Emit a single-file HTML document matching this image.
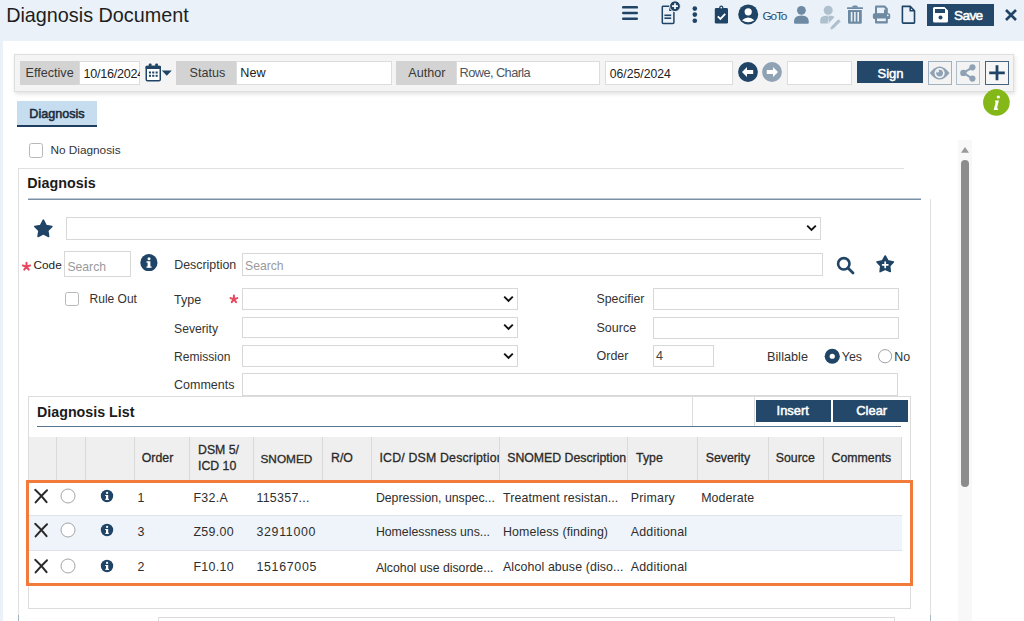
<!DOCTYPE html>
<html><head><meta charset="utf-8"><style>
html,body{margin:0;padding:0;width:1024px;height:621px;overflow:hidden;background:#fff}
body{position:relative;font-family:"Liberation Sans",sans-serif}
.r{position:absolute;display:block}
.t{position:absolute;white-space:nowrap}
</style></head><body>
<div class="r" style="left:0px;top:0px;width:1024.00px;height:41.00px;background:#eaf1f8"></div>
<div class="r" style="left:0px;top:41px;width:3.00px;height:580.00px;background:#eaf1f8"></div>
<div class="r" style="left:3px;top:41px;width:1021.00px;height:580.00px;background:#ffffff"></div>
<div class="t" style="left:6.2px;top:2.76px;font-size:19.8px;line-height:24.75px;font-weight:400;color:#1e1e1e;">Diagnosis Document</div>
<svg class="r" style="left:622px;top:5px;width:16.00px;height:16.00px" viewBox="0 0 16 16" preserveAspectRatio="none"><rect x="0" y="1" width="16" height="2.6" rx="1.2" fill="#1f4466"/><rect x="0" y="6.7" width="16" height="2.6" rx="1.2" fill="#1f4466"/><rect x="0" y="12.4" width="16" height="2.6" rx="1.2" fill="#1f4466"/></svg>
<svg class="r" style="left:660px;top:0px;width:22.00px;height:25.00px" viewBox="0 0 22 25" preserveAspectRatio="none"><path d="M2.3 6.3 h7.4 l4.2 4.2 v12.1 a0.9 0.9 0 0 1 -0.9 0.9 h-9.8 a0.9 0.9 0 0 1 -0.9 -0.9 v-15.4 a0.9 0.9 0 0 1 0.9 -0.9z" fill="none" stroke="#1f4466" stroke-width="1.5"/><path d="M9.2 6.5 v4.5 h4.5z" fill="#1f4466"/><rect x="4.4" y="14.5" width="6.8" height="1.6" fill="#1f4466"/><rect x="4.4" y="17.4" width="6.8" height="1.6" fill="#1f4466"/><circle cx="15" cy="6.2" r="5.4" fill="#1f4466" stroke="#eaf1f8" stroke-width="1"/><path d="M15 3.3v5.8M12.1 6.2h5.8" stroke="#fff" stroke-width="1.7"/></svg>
<svg class="r" style="left:690px;top:5px;width:10.00px;height:19.00px" viewBox="0 0 10 19" preserveAspectRatio="none"><circle cx="4.8" cy="3.6" r="2.3" fill="#1f4466"/><circle cx="4.8" cy="9.6" r="2.3" fill="#1f4466"/><circle cx="4.8" cy="15.8" r="2.3" fill="#1f4466"/></svg>
<svg class="r" style="left:714px;top:5px;width:15.00px;height:19.00px" viewBox="0 0 15 19" preserveAspectRatio="none"><rect x="0.8" y="3" width="13.2" height="15.6" rx="1.4" fill="#1f4466"/><circle cx="7.3" cy="2.6" r="2.1" fill="#1f4466"/><circle cx="7.3" cy="2.6" r="0.9" fill="#eaf1f8"/><path d="M3.8 11.3 l2.6 2.6 l4.8 -5" fill="none" stroke="#fff" stroke-width="1.8"/></svg>
<svg class="r" style="left:737px;top:4px;width:22.00px;height:21.00px" viewBox="0 0 22 21" preserveAspectRatio="none"><circle cx="11.2" cy="10.4" r="10" fill="#1f4466"/><circle cx="11.2" cy="7.8" r="3.6" fill="#fff"/><path d="M5 16.2 q6.2 -5.5 12.4 0 q-6.2 4.2 -12.4 0z" fill="#fff"/></svg>
<div class="t" style="left:762.4px;top:8.83px;font-size:11.8px;line-height:14.75px;font-weight:400;color:#2c4c6c;letter-spacing:-1.1px">GoTo</div>
<svg class="r" style="left:793px;top:4px;width:17.00px;height:20.00px" viewBox="0 0 17 20" preserveAspectRatio="none"><circle cx="8.4" cy="6.3" r="4.4" fill="#6d8aa2"/><path d="M1 17.5 q0 -6 7.4 -6 q7.4 0 7.4 6 v1 q0 1.2 -1.2 1.2 h-12.4 q-1.2 0 -1.2 -1.2z" fill="#6d8aa2"/></svg>
<svg class="r" style="left:820px;top:4px;width:22.00px;height:26.00px" viewBox="0 0 22 26" preserveAspectRatio="none"><circle cx="8.2" cy="6.2" r="4.5" fill="#aebfcd"/><path d="M0.2 18.4 v-1.8 q0 -4.6 5.5 -4.8 h5 q2.6 0 3.8 1.3 l-5.3 5.6 v0.9 h-7.8 a1.2 1.2 0 0 1 -1.2 -1.2z" fill="#aebfcd"/><path d="M7.6 12.2 l0.7 1.4 l-0.6 5.6 l0.6 0.6 l0.6 -0.6 l-0.6 -5.6 l0.7 -1.4z" fill="#eaf1f8"/><path d="M11.5 22.8 l7 -7 l1.6 1.6 l-7 7 l-2.2 0.6z" fill="#aebfcd" stroke="#aebfcd" stroke-width="1" stroke-linejoin="round"/></svg>
<svg class="r" style="left:846px;top:4px;width:18.00px;height:20.00px" viewBox="0 0 18 20" preserveAspectRatio="none"><rect x="1" y="3.2" width="16" height="1.8" rx="0.5" fill="#6d8aa2"/><path d="M6 3.4 q0 -2 2 -2 h2 q2 0 2 2z" fill="#6d8aa2"/><path d="M2 5.9 h13.8 v12.6 a1.2 1.2 0 0 1 -1.2 1.2 h-11.4 a1.2 1.2 0 0 1 -1.2 -1.2z" fill="#6d8aa2"/><rect x="4.8" y="8" width="1.6" height="9.6" fill="#eaf1f8"/><rect x="8.1" y="8" width="1.6" height="9.6" fill="#eaf1f8"/><rect x="11.4" y="8" width="1.6" height="9.6" fill="#eaf1f8"/></svg>
<svg class="r" style="left:872px;top:4px;width:19.00px;height:20.00px" viewBox="0 0 19 20" preserveAspectRatio="none"><path d="M3 2.6 a1 1 0 0 1 1 -1 h9 l2.8 2.8 v5.6 h-12.8z" fill="#6d8aa2"/><rect x="5" y="3.6" width="7" height="6" fill="#eaf1f8"/><path d="M12 3.6 v2 h1.8z" fill="#eaf1f8"/><rect x="0.9" y="9.2" width="17.3" height="5.8" rx="1.6" fill="#6d8aa2"/><circle cx="15.8" cy="11.3" r="0.9" fill="#eaf1f8"/><path d="M3 13.6 h12.8 v4.8 a1 1 0 0 1 -1 1 h-10.8 a1 1 0 0 1 -1 -1z" fill="#6d8aa2"/><rect x="5" y="14.5" width="8.8" height="2.7" fill="#eaf1f8"/></svg>
<svg class="r" style="left:901px;top:4px;width:15.00px;height:21.00px" viewBox="0 0 15 21" preserveAspectRatio="none"><path d="M1.4 2.4 h7.8 l4.3 4.3 v11.5 a0.9 0.9 0 0 1 -0.9 0.9 h-10.3 a0.9 0.9 0 0 1 -0.9 -0.9z" fill="none" stroke="#1f4466" stroke-width="1.6" stroke-linejoin="round"/><path d="M9.2 2.4 v4.3 h4.3" fill="none" stroke="#1f4466" stroke-width="1.5"/></svg>
<div class="r" style="left:927px;top:3.6px;width:67.00px;height:22.10px;background:#234869"></div>
<svg class="r" style="left:932px;top:6px;width:18.00px;height:17.00px" viewBox="0 0 18 17" preserveAspectRatio="none"><path d="M1 2.5 a1.5 1.5 0 0 1 1.5 -1.5 h10 l3.5 3.5 v10.5 a1.5 1.5 0 0 1 -1.5 1.5 h-12 a1.5 1.5 0 0 1 -1.5 -1.5z" fill="#fff"/><rect x="3" y="3" width="10" height="4" fill="#234869"/><circle cx="8.5" cy="11.5" r="2" fill="#234869"/></svg>
<div class="t" style="left:954px;top:6.78px;font-size:13.6px;line-height:17.0px;font-weight:400;color:#fff;letter-spacing:-0.6px;-webkit-text-stroke:0.55px #fff">Save</div>
<svg class="r" style="left:1004px;top:8px;width:14.00px;height:13.00px" viewBox="0 0 14 13" preserveAspectRatio="none"><path d="M2 2 L12 12 M12 2 L2 12" stroke="#1f4466" stroke-width="2.6"/></svg>
<div class="r" style="left:14px;top:54px;width:1000.00px;height:37.50px;background:#f4f4f4;border:1px solid #dedede;box-sizing:border-box;box-shadow:1px 2px 4px rgba(0,0,0,0.12)"></div>
<div class="r" style="left:20px;top:61px;width:58.60px;height:23.60px;background:#d3d3d3"></div>
<div class="t" style="left:25.6px;top:66.16px;font-size:12.6px;line-height:15.75px;font-weight:400;color:#383838;">Effective</div>
<div class="r" style="left:78.6px;top:61px;width:61.50px;height:23.60px;background:#fff;border:1px solid #dcdcdc;box-sizing:border-box"></div>
<div class="r" style="left:79.6px;top:62px;width:60px;height:21.6px;overflow:hidden">
<div class="t" style="left:4px;top:4.96px;font-size:12.6px;line-height:15.75px;font-weight:400;color:#222;letter-spacing:-0.25px">10/16/2024</div>
</div>
<svg class="r" style="left:145px;top:63px;width:28.00px;height:19.00px" viewBox="0 0 28 19" preserveAspectRatio="none"><rect x="1.25" y="3.55" width="14" height="14.2" rx="1.3" fill="#fff" stroke="#1f4466" stroke-width="1.5"/><rect x="0.5" y="2.8" width="15.5" height="3.2" rx="1" fill="#1f4466"/><rect x="3.9" y="0.5" width="2.6" height="3" rx="0.8" fill="#1f4466"/><rect x="10.3" y="0.5" width="2.6" height="3" rx="0.8" fill="#1f4466"/><g fill="#1f4466"><rect x="3.9" y="8.5" width="2.1" height="2"/><rect x="7.2" y="8.5" width="2.1" height="2"/><rect x="10.6" y="8.5" width="2.1" height="2"/><rect x="3.9" y="11.8" width="2.1" height="2"/><rect x="7.2" y="11.8" width="2.1" height="2"/><rect x="10.6" y="11.8" width="2.1" height="2"/></g><path d="M16.8 7.4 h10 l-5 5.4z" fill="#1f4466"/></svg>
<div class="r" style="left:176.2px;top:61px;width:60.20px;height:23.60px;background:#d3d3d3"></div>
<div class="t" style="left:189.5px;top:66.16px;font-size:12.6px;line-height:15.75px;font-weight:400;color:#383838;">Status</div>
<div class="r" style="left:236.4px;top:61px;width:155.30px;height:23.60px;background:#fff;border:1px solid #dcdcdc;box-sizing:border-box"></div>
<div class="t" style="left:240.3px;top:66.16px;font-size:12.6px;line-height:15.75px;font-weight:400;color:#222;">New</div>
<div class="r" style="left:396.1px;top:61px;width:60.30px;height:23.60px;background:#d3d3d3"></div>
<div class="t" style="left:408.3px;top:66.16px;font-size:12.6px;line-height:15.75px;font-weight:400;color:#383838;">Author</div>
<div class="r" style="left:456.4px;top:61px;width:144.00px;height:23.60px;background:#fff;border:1px solid #dcdcdc;box-sizing:border-box"></div>
<div class="t" style="left:459.6px;top:64.56px;font-size:12.8px;line-height:16.0px;font-weight:400;color:#4d5560;letter-spacing:-0.58px">Rowe, Charla</div>
<div class="r" style="left:605.4px;top:61px;width:127.20px;height:23.60px;background:#fff;border:1px solid #dcdcdc;box-sizing:border-box"></div>
<div class="t" style="left:609.8px;top:66.55px;font-size:12.2px;line-height:15.25px;font-weight:400;color:#222;">06/25/2024</div>
<svg class="r" style="left:737.5px;top:61.5px;width:20.00px;height:20.00px" viewBox="0 0 20.0 20.0" preserveAspectRatio="none"><circle cx="10" cy="10" r="9.9" fill="#1f4466"/><path d="M4 10 l5 -5 v3 h6.2 v4 h-6.2 v3z" fill="#fff"/></svg>
<svg class="r" style="left:761.6px;top:61.5px;width:20.00px;height:20.00px" viewBox="0 0 20.0 20.0" preserveAspectRatio="none"><circle cx="10" cy="10" r="9.9" fill="#8fa3b5"/><path d="M16 10 l-5 -5 v3 h-6.2 v4 h6.2 v3z" fill="#fff"/></svg>
<div class="r" style="left:786.5px;top:61px;width:65.00px;height:23.60px;background:#fff;border:1px solid #dcdcdc;box-sizing:border-box"></div>
<div class="r" style="left:856.7px;top:61.4px;width:66.30px;height:22.00px;background:#234869"></div>
<div class="t" style="left:877.5px;top:65.57px;font-size:13px;line-height:16.25px;font-weight:400;color:#fff;-webkit-text-stroke:0.5px #fff">Sign</div>
<div class="r" style="left:928px;top:60.5px;width:24.00px;height:24.10px;border:1px solid #9fb1c0;box-sizing:border-box;background:#f3f3f3"></div>
<svg class="r" style="left:928px;top:60.5px;width:24.00px;height:24.10px" viewBox="0 0 24 24.099999999999994" preserveAspectRatio="none"><path d="M1.7 12 Q11.6 -1.2 21.5 12 Q11.6 25.2 1.7 12z" fill="#8ea2b4"/><circle cx="11.6" cy="12.1" r="5.1" fill="#f3f3f3"/><circle cx="11.6" cy="12.1" r="3.4" fill="#8ea2b4"/><circle cx="9.7" cy="10.2" r="1.3" fill="#f3f3f3"/></svg>
<div class="r" style="left:956px;top:60.5px;width:24.00px;height:24.10px;border:1px solid #aebdca;box-sizing:border-box;background:#f3f3f3"></div>
<svg class="r" style="left:956px;top:60.5px;width:24.00px;height:24.10px" viewBox="0 0 24 24.099999999999994" preserveAspectRatio="none"><path d="M7.4 11.9 L16.4 6.3 M7.4 11.9 L16.4 17.6" stroke="#8ea2b4" stroke-width="2"/><circle cx="7.4" cy="11.9" r="3.2" fill="#8ea2b4"/><circle cx="16.4" cy="6.3" r="3.1" fill="#8ea2b4"/><circle cx="16.4" cy="17.6" r="3.1" fill="#8ea2b4"/></svg>
<div class="r" style="left:985px;top:60.5px;width:24.00px;height:24.10px;border:1px solid #47627e;box-sizing:border-box;background:#f6f6f6"></div>
<svg class="r" style="left:985px;top:60.5px;width:24.00px;height:24.10px" viewBox="0 0 24 24.099999999999994" preserveAspectRatio="none"><path d="M12 4.2 v15 M4.2 11.8 h15.6" stroke="#1f4466" stroke-width="2.8"/></svg>
<svg class="r" style="left:983px;top:89px;width:27.00px;height:27.00px" viewBox="0 0 27 27" preserveAspectRatio="none"><circle cx="13.4" cy="13.4" r="13.3" fill="#84b818"/><circle cx="15.3" cy="8" r="1.6" fill="#fff"/><path d="M12.3 11.5 h3.6 l-2 8 h1.4 l-0.4 1.5 h-4.2 l2 -8 h-0.8z" fill="#fff"/></svg>
<div class="r" style="left:17px;top:101.4px;width:80.00px;height:25.80px;background:#c6dcef;border-bottom:2.3px solid #1f3d5c;box-sizing:border-box"></div>
<div class="t" style="left:29.3px;top:107.16px;font-size:12.6px;line-height:15.75px;font-weight:400;color:#1b2b3b;-webkit-text-stroke:0.55px #1b2b3b">Diagnosis</div>
<div class="r" style="left:29.3px;top:143px;width:14.10px;height:14.50px;border:1.3px solid #b8b8b8;border-radius:2.5px;box-sizing:border-box;background:#fff"></div>
<div class="t" style="left:50.4px;top:142.53px;font-size:11.8px;line-height:14.75px;font-weight:400;color:#333;">No Diagnosis</div>
<div class="r" style="left:18px;top:168px;width:886.00px;height:1.00px;background:#e0e0e0"></div>
<div class="r" style="left:18px;top:168px;width:1.00px;height:447.00px;background:#e0e0e0"></div>
<div class="r" style="left:930px;top:198.5px;width:1.00px;height:422.50px;background:#e0e0e0"></div>
<div class="r" style="left:18px;top:615px;width:1.00px;height:6.00px;background:#9fb0bf"></div>
<div class="r" style="left:930px;top:615px;width:1.00px;height:6.00px;background:#a9b8c5"></div>
<div class="t" style="left:27.3px;top:174.50px;font-size:14.3px;line-height:17.88px;font-weight:700;color:#1b1b1b;">Diagnosis</div>
<div class="r" style="left:27.6px;top:198px;width:893.40px;height:1.00px;background:#bcc8d3"></div>
<div class="r" style="left:27.6px;top:199px;width:893.40px;height:1.00px;background:#7a90a4"></div>
<div class="r" style="left:958px;top:139.5px;width:13.50px;height:481.50px;background:#f8f8f8"></div>
<svg class="r" style="left:960px;top:146px;width:10.00px;height:8.00px" viewBox="0 0 10 8" preserveAspectRatio="none"><path d="M1 6.8 L5 1 L9 6.8z" fill="#9a9a9a"/></svg>
<div class="r" style="left:961px;top:160px;width:8.00px;height:327.00px;background:#8c8c8c;border-radius:4px"></div>
<svg class="r" style="left:33px;top:218px;width:21.00px;height:22.00px" viewBox="0 0 21 22" preserveAspectRatio="none"><path d="M10.35 2.20 L13.05 7.48 L18.91 8.42 L14.72 12.62 L15.64 18.48 L10.35 15.80 L5.06 18.48 L5.98 12.62 L1.79 8.42 L7.65 7.48z" fill="#1f4466" stroke="#1f4466" stroke-width="1.6" stroke-linejoin="round"/></svg>
<div class="r" style="left:66px;top:217.2px;width:754.50px;height:22.40px;border:1px solid #d8d8d8;box-sizing:border-box;background:#fff"></div>
<svg class="r" style="left:805.5px;top:224.4px;width:11.00px;height:8.00px" viewBox="0 0 11.0 8.0" preserveAspectRatio="none"><path d="M1.2 1.6 L5.5 5.9 L9.8 1.6" fill="none" stroke="#111" stroke-width="1.9"/></svg>
<svg class="r" style="left:21px;top:261px;width:11.00px;height:11.00px" viewBox="0 0 11 11" preserveAspectRatio="none"><path d="M5.50 5.60 L5.50 1.80 M5.50 5.60 L9.11 4.43 M5.50 5.60 L7.73 8.67 M5.50 5.60 L3.27 8.67 M5.50 5.60 L1.89 4.43 " stroke="#e8485f" stroke-width="2" stroke-linecap="round"/></svg>
<div class="t" style="left:33.5px;top:257.63px;font-size:11.8px;line-height:14.75px;font-weight:400;color:#222;">Code</div>
<div class="r" style="left:64.3px;top:251.3px;width:67.10px;height:26.20px;border:1px solid #d8d8d8;box-sizing:border-box;background:#fff"></div>
<div class="t" style="left:67.4px;top:259.65px;font-size:12.2px;line-height:15.25px;font-weight:400;color:#9a9a9a;">Search</div>
<svg class="r" style="left:139.5px;top:253.5px;width:18.00px;height:17.50px" viewBox="0 0 18.0 17.5" preserveAspectRatio="none"><circle cx="8.9" cy="8.7" r="8.6" fill="#1f4466"/><rect x="7.6" y="7.3" width="2.8" height="6.2" fill="#fff"/><rect x="6.4" y="7.3" width="2" height="1.3" fill="#fff"/><rect x="6.4" y="12.4" width="5.2" height="1.3" fill="#fff"/><circle cx="9" cy="4.8" r="1.5" fill="#fff"/></svg>
<div class="t" style="left:174.2px;top:258.25px;font-size:12.4px;line-height:15.5px;font-weight:400;color:#333;">Description</div>
<div class="r" style="left:242px;top:253px;width:580.50px;height:22.50px;border:1px solid #d8d8d8;box-sizing:border-box;background:#fff"></div>
<div class="t" style="left:245px;top:258.65px;font-size:12.2px;line-height:15.25px;font-weight:400;color:#9a9a9a;">Search</div>
<svg class="r" style="left:836px;top:256.4px;width:20.00px;height:19.00px" viewBox="0 0 20 19.0" preserveAspectRatio="none"><circle cx="7.8" cy="7.8" r="5.7" fill="none" stroke="#1f4466" stroke-width="2.6"/><path d="M12 12 L17 17" stroke="#1f4466" stroke-width="2.8" stroke-linecap="round"/></svg>
<svg class="r" style="left:875px;top:254px;width:21.00px;height:20.00px" viewBox="0 0 21 20" preserveAspectRatio="none"><path d="M10.20 2.00 L12.96 6.80 L18.38 7.94 L14.67 12.05 L15.25 17.56 L10.20 15.30 L5.15 17.56 L5.73 12.05 L2.02 7.94 L7.44 6.80z" fill="#1f4466" stroke="#1f4466" stroke-width="1.6" stroke-linejoin="round"/><path d="M10.2 7.6 v6.6 M6.9 10.9 h6.6" stroke="#fff" stroke-width="1.7"/></svg>
<div class="r" style="left:65.1px;top:292.1px;width:14.00px;height:14.10px;border:1.3px solid #b8b8b8;border-radius:2.5px;box-sizing:border-box;background:#fff"></div>
<div class="t" style="left:89.6px;top:291.94px;font-size:12px;line-height:15.0px;font-weight:400;color:#333;">Rule Out</div>
<div class="t" style="left:174px;top:293.06px;font-size:12.5px;line-height:15.62px;font-weight:400;color:#333;">Type</div>
<svg class="r" style="left:229px;top:294px;width:10.00px;height:10.00px" viewBox="0 0 10 10" preserveAspectRatio="none"><path d="M4.90 5.20 L4.90 1.60 M4.90 5.20 L8.32 4.09 M4.90 5.20 L7.02 8.11 M4.90 5.20 L2.78 8.11 M4.90 5.20 L1.48 4.09 " stroke="#e8485f" stroke-width="2" stroke-linecap="round"/></svg>
<div class="r" style="left:242px;top:288.2px;width:275.70px;height:21.40px;border:1px solid #d8d8d8;box-sizing:border-box;background:#fff"></div>
<svg class="r" style="left:503.0px;top:295px;width:11.00px;height:8.00px" viewBox="0 0 11.0 8" preserveAspectRatio="none"><path d="M1.2 1.6 L5.5 5.9 L9.8 1.6" fill="none" stroke="#111" stroke-width="1.9"/></svg>
<div class="t" style="left:596.5px;top:292.35px;font-size:12.3px;line-height:15.38px;font-weight:400;color:#333;">Specifier</div>
<div class="r" style="left:653px;top:288px;width:246.00px;height:22.40px;border:1px solid #d8d8d8;box-sizing:border-box;background:#fff"></div>
<div class="t" style="left:174px;top:321.75px;font-size:12.2px;line-height:15.25px;font-weight:400;color:#333;">Severity</div>
<div class="r" style="left:242px;top:316.5px;width:275.70px;height:21.80px;border:1px solid #d8d8d8;box-sizing:border-box;background:#fff"></div>
<svg class="r" style="left:503.0px;top:323.4px;width:11.00px;height:8.00px" viewBox="0 0 11.0 8.0" preserveAspectRatio="none"><path d="M1.2 1.6 L5.5 5.9 L9.8 1.6" fill="none" stroke="#111" stroke-width="1.9"/></svg>
<div class="t" style="left:596.5px;top:320.76px;font-size:12.5px;line-height:15.62px;font-weight:400;color:#333;">Source</div>
<div class="r" style="left:653px;top:316.5px;width:246.00px;height:22.50px;border:1px solid #d8d8d8;box-sizing:border-box;background:#fff"></div>
<div class="t" style="left:174px;top:349.74px;font-size:12.1px;line-height:15.12px;font-weight:400;color:#333;">Remission</div>
<div class="r" style="left:242px;top:345.2px;width:275.70px;height:21.60px;border:1px solid #d8d8d8;box-sizing:border-box;background:#fff"></div>
<svg class="r" style="left:503.0px;top:352px;width:11.00px;height:8.00px" viewBox="0 0 11.0 8" preserveAspectRatio="none"><path d="M1.2 1.6 L5.5 5.9 L9.8 1.6" fill="none" stroke="#111" stroke-width="1.9"/></svg>
<div class="t" style="left:596.5px;top:348.66px;font-size:12.5px;line-height:15.62px;font-weight:400;color:#333;">Order</div>
<div class="r" style="left:653px;top:345px;width:60.70px;height:22.40px;border:1px solid #d8d8d8;box-sizing:border-box;background:#fff"></div>
<div class="t" style="left:656px;top:348.76px;font-size:12.6px;line-height:15.75px;font-weight:400;color:#444;">4</div>
<div class="t" style="left:767.1px;top:349.86px;font-size:12.7px;line-height:15.88px;font-weight:400;color:#333;">Billable</div>
<svg class="r" style="left:823.5px;top:347.6px;width:16.50px;height:16.50px" viewBox="0 0 16.5 16.5" preserveAspectRatio="none"><circle cx="8.25" cy="8.25" r="7.6" fill="#1f4466"/><circle cx="8.25" cy="8.25" r="2.6" fill="#fff"/></svg>
<div class="t" style="left:841.8px;top:350.15px;font-size:12.4px;line-height:15.5px;font-weight:400;color:#333;">Yes</div>
<svg class="r" style="left:876.5px;top:347.6px;width:16.50px;height:16.50px" viewBox="0 0 16.5 16.5" preserveAspectRatio="none"><circle cx="8.1" cy="8.25" r="6.6" fill="#fff" stroke="#a0a0a0" stroke-width="1"/></svg>
<div class="t" style="left:894.3px;top:350.15px;font-size:12.4px;line-height:15.5px;font-weight:400;color:#333;">No</div>
<div class="t" style="left:174px;top:378.16px;font-size:12.5px;line-height:15.62px;font-weight:400;color:#333;">Comments</div>
<div class="r" style="left:242px;top:373.3px;width:655.80px;height:22.90px;border:1px solid #d8d8d8;box-sizing:border-box;background:#fff"></div>
<div class="r" style="left:28px;top:396px;width:882.50px;height:212.50px;border:1px solid #dcdcdc;box-sizing:border-box;background:#fff"></div>
<div class="t" style="left:37px;top:404.15px;font-size:14.25px;line-height:17.81px;font-weight:700;color:#1b1b1b;">Diagnosis List</div>
<div class="r" style="left:692px;top:396px;width:1.00px;height:30.00px;background:#dcdcdc"></div>
<div class="r" style="left:754px;top:396px;width:1.00px;height:30.00px;background:#dcdcdc"></div>
<div class="r" style="left:756px;top:400px;width:74.70px;height:22.20px;background:#234869"></div>
<div class="t" style="left:776.6px;top:403.47px;font-size:12.9px;line-height:16.12px;font-weight:400;color:#fff;-webkit-text-stroke:0.5px #fff">Insert</div>
<div class="r" style="left:833.4px;top:400px;width:74.70px;height:22.20px;background:#234869"></div>
<div class="t" style="left:856.3px;top:403.47px;font-size:12.9px;line-height:16.12px;font-weight:400;color:#fff;-webkit-text-stroke:0.5px #fff">Clear</div>
<div class="r" style="left:37px;top:426px;width:864.00px;height:1.00px;background:#5a7590"></div>
<div class="r" style="left:29px;top:437.4px;width:872.70px;height:42.60px;background:#efefef"></div>
<div class="r" style="left:56px;top:437.4px;width:1.00px;height:42.60px;background:#dadada"></div>
<div class="r" style="left:85px;top:437.4px;width:1.00px;height:42.60px;background:#dadada"></div>
<div class="r" style="left:134px;top:437.4px;width:1.00px;height:42.60px;background:#dadada"></div>
<div class="r" style="left:189px;top:437.4px;width:1.00px;height:42.60px;background:#dadada"></div>
<div class="r" style="left:252.5px;top:437.4px;width:1.00px;height:42.60px;background:#dadada"></div>
<div class="r" style="left:322px;top:437.4px;width:1.00px;height:42.60px;background:#dadada"></div>
<div class="r" style="left:370.5px;top:437.4px;width:1.00px;height:42.60px;background:#dadada"></div>
<div class="r" style="left:499px;top:437.4px;width:1.00px;height:42.60px;background:#dadada"></div>
<div class="r" style="left:627px;top:437.4px;width:1.00px;height:42.60px;background:#dadada"></div>
<div class="r" style="left:697px;top:437.4px;width:1.00px;height:42.60px;background:#dadada"></div>
<div class="r" style="left:767.5px;top:437.4px;width:1.00px;height:42.60px;background:#dadada"></div>
<div class="r" style="left:823px;top:437.4px;width:1.00px;height:42.60px;background:#dadada"></div>
<div class="r" style="left:901.2px;top:437.4px;width:1.00px;height:42.60px;background:#dadada"></div>
<div class="t" style="left:141.8px;top:451.15px;font-size:12.3px;line-height:15.38px;font-weight:400;color:#2a2a2a;-webkit-text-stroke:0.3px #2a2a2a">Order</div>
<div class="t" style="left:198px;top:443.05px;font-size:12.3px;line-height:15.38px;font-weight:400;color:#2a2a2a;-webkit-text-stroke:0.3px #2a2a2a">DSM 5/</div>
<div class="t" style="left:198px;top:459.05px;font-size:12.3px;line-height:15.38px;font-weight:400;color:#2a2a2a;-webkit-text-stroke:0.3px #2a2a2a">ICD 10</div>
<div class="t" style="left:260.5px;top:451.63px;font-size:11.8px;line-height:14.75px;font-weight:400;color:#2a2a2a;-webkit-text-stroke:0.3px #2a2a2a">SNOMED</div>
<div class="t" style="left:331px;top:451.15px;font-size:12.3px;line-height:15.38px;font-weight:400;color:#2a2a2a;-webkit-text-stroke:0.3px #2a2a2a">R/O</div>
<div class="r" style="left:371.7px;top:440px;width:127.6px;height:38px;overflow:hidden">
<div class="t" style="left:7.8px;top:11.15px;font-size:12.3px;line-height:15.38px;font-weight:400;color:#2a2a2a;letter-spacing:0.2px;-webkit-text-stroke:0.3px #2a2a2a">ICD/ DSM Description</div>
</div>
<div class="t" style="left:507.2px;top:451.15px;font-size:12.3px;line-height:15.38px;font-weight:400;color:#2a2a2a;-webkit-text-stroke:0.3px #2a2a2a">SNOMED Description</div>
<div class="t" style="left:636.1px;top:451.15px;font-size:12.3px;line-height:15.38px;font-weight:400;color:#2a2a2a;-webkit-text-stroke:0.3px #2a2a2a">Type</div>
<div class="t" style="left:705.7px;top:451.15px;font-size:12.3px;line-height:15.38px;font-weight:400;color:#2a2a2a;-webkit-text-stroke:0.3px #2a2a2a">Severity</div>
<div class="t" style="left:775.8px;top:451.15px;font-size:12.3px;line-height:15.38px;font-weight:400;color:#2a2a2a;-webkit-text-stroke:0.3px #2a2a2a">Source</div>
<div class="t" style="left:831.6px;top:451.15px;font-size:12.3px;line-height:15.38px;font-weight:400;color:#2a2a2a;-webkit-text-stroke:0.3px #2a2a2a">Comments</div>
<div class="r" style="left:29px;top:515px;width:873.00px;height:35.20px;background:#eef4f9"></div>
<div class="r" style="left:29px;top:515px;width:873.00px;height:1.00px;background:#dde3e9"></div>
<div class="r" style="left:29px;top:549.7px;width:873.00px;height:1.00px;background:#dde3e9"></div>
<svg class="r" style="left:33px;top:487.8px;width:16.00px;height:16.00px" viewBox="0 0 16 16.0" preserveAspectRatio="none"><path d="M2.2 1.8 Q8 7 13.6 14.2 M14 2.2 Q8 8 2.6 14.4" fill="none" stroke="#2a2a2a" stroke-width="2" stroke-linecap="round"/></svg>
<svg class="r" style="left:59.5px;top:487.8px;width:16.00px;height:16.00px" viewBox="0 0 16.0 16.0" preserveAspectRatio="none"><circle cx="8" cy="8" r="7" fill="#fff" stroke="#a5a5a5" stroke-width="1"/></svg>
<svg class="r" style="left:100px;top:488.8px;width:14.00px;height:14.00px" viewBox="0 0 14 14.0" preserveAspectRatio="none"><circle cx="7" cy="7" r="6.2" fill="#1f4466"/><rect x="6" y="6" width="2.2" height="4.8" fill="#fff"/><rect x="5.2" y="6" width="1.6" height="1" fill="#fff"/><rect x="5.2" y="9.8" width="3.8" height="1" fill="#fff"/><circle cx="7.1" cy="3.9" r="1.1" fill="#fff"/></svg>
<div class="t" style="left:137.5px;top:490.75px;font-size:12.4px;line-height:15.5px;font-weight:400;color:#2e2e2e;">1</div>
<div class="t" style="left:193.5px;top:490.75px;font-size:12.4px;line-height:15.5px;font-weight:400;color:#2e2e2e;letter-spacing:0.3px">F32.A</div>
<div class="t" style="left:256.4px;top:490.75px;font-size:12.4px;line-height:15.5px;font-weight:400;color:#2e2e2e;letter-spacing:0.3px">115357...</div>
<div class="t" style="left:375.9px;top:490.85px;font-size:12.3px;line-height:15.38px;font-weight:400;color:#2e2e2e;">Depression, unspec...</div>
<div class="t" style="left:503px;top:490.75px;font-size:12.4px;line-height:15.5px;font-weight:400;color:#2e2e2e;letter-spacing:0.1px">Treatment resistan...</div>
<div class="t" style="left:630.8px;top:490.75px;font-size:12.4px;line-height:15.5px;font-weight:400;color:#2e2e2e;letter-spacing:0.2px">Primary</div>
<div class="t" style="left:701.2px;top:490.75px;font-size:12.4px;line-height:15.5px;font-weight:400;color:#2e2e2e;letter-spacing:0.1px">Moderate</div>
<svg class="r" style="left:33px;top:522.1px;width:16.00px;height:16.00px" viewBox="0 0 16 16.0" preserveAspectRatio="none"><path d="M2.2 1.8 Q8 7 13.6 14.2 M14 2.2 Q8 8 2.6 14.4" fill="none" stroke="#2a2a2a" stroke-width="2" stroke-linecap="round"/></svg>
<svg class="r" style="left:59.5px;top:522.1px;width:16.00px;height:16.00px" viewBox="0 0 16.0 16.0" preserveAspectRatio="none"><circle cx="8" cy="8" r="7" fill="#fff" stroke="#a5a5a5" stroke-width="1"/></svg>
<svg class="r" style="left:100px;top:523.1px;width:14.00px;height:14.00px" viewBox="0 0 14 14.0" preserveAspectRatio="none"><circle cx="7" cy="7" r="6.2" fill="#1f4466"/><rect x="6" y="6" width="2.2" height="4.8" fill="#fff"/><rect x="5.2" y="6" width="1.6" height="1" fill="#fff"/><rect x="5.2" y="9.8" width="3.8" height="1" fill="#fff"/><circle cx="7.1" cy="3.9" r="1.1" fill="#fff"/></svg>
<div class="t" style="left:137.5px;top:525.05px;font-size:12.4px;line-height:15.5px;font-weight:400;color:#2e2e2e;">3</div>
<div class="t" style="left:193.5px;top:525.05px;font-size:12.4px;line-height:15.5px;font-weight:400;color:#2e2e2e;letter-spacing:0.3px">Z59.00</div>
<div class="t" style="left:256.4px;top:525.05px;font-size:12.4px;line-height:15.5px;font-weight:400;color:#2e2e2e;letter-spacing:0.7px">32911000</div>
<div class="t" style="left:375.9px;top:525.15px;font-size:12.3px;line-height:15.38px;font-weight:400;color:#2e2e2e;">Homelessness uns...</div>
<div class="t" style="left:503px;top:525.05px;font-size:12.4px;line-height:15.5px;font-weight:400;color:#2e2e2e;letter-spacing:0.1px">Homeless (finding)</div>
<div class="t" style="left:630.8px;top:525.05px;font-size:12.4px;line-height:15.5px;font-weight:400;color:#2e2e2e;letter-spacing:0.2px">Additional</div>
<svg class="r" style="left:33px;top:557.5px;width:16.00px;height:16.00px" viewBox="0 0 16 16.0" preserveAspectRatio="none"><path d="M2.2 1.8 Q8 7 13.6 14.2 M14 2.2 Q8 8 2.6 14.4" fill="none" stroke="#2a2a2a" stroke-width="2" stroke-linecap="round"/></svg>
<svg class="r" style="left:59.5px;top:557.5px;width:16.00px;height:16.00px" viewBox="0 0 16.0 16.0" preserveAspectRatio="none"><circle cx="8" cy="8" r="7" fill="#fff" stroke="#a5a5a5" stroke-width="1"/></svg>
<svg class="r" style="left:100px;top:558.5px;width:14.00px;height:14.00px" viewBox="0 0 14 14.0" preserveAspectRatio="none"><circle cx="7" cy="7" r="6.2" fill="#1f4466"/><rect x="6" y="6" width="2.2" height="4.8" fill="#fff"/><rect x="5.2" y="6" width="1.6" height="1" fill="#fff"/><rect x="5.2" y="9.8" width="3.8" height="1" fill="#fff"/><circle cx="7.1" cy="3.9" r="1.1" fill="#fff"/></svg>
<div class="t" style="left:137.5px;top:560.45px;font-size:12.4px;line-height:15.5px;font-weight:400;color:#2e2e2e;">2</div>
<div class="t" style="left:193.5px;top:560.45px;font-size:12.4px;line-height:15.5px;font-weight:400;color:#2e2e2e;letter-spacing:0.3px">F10.10</div>
<div class="t" style="left:256.4px;top:560.45px;font-size:12.4px;line-height:15.5px;font-weight:400;color:#2e2e2e;letter-spacing:0.7px">15167005</div>
<div class="t" style="left:375.9px;top:560.55px;font-size:12.3px;line-height:15.38px;font-weight:400;color:#2e2e2e;">Alcohol use disorde...</div>
<div class="t" style="left:503px;top:560.45px;font-size:12.4px;line-height:15.5px;font-weight:400;color:#2e2e2e;letter-spacing:0.1px">Alcohol abuse (diso...</div>
<div class="t" style="left:630.8px;top:560.45px;font-size:12.4px;line-height:15.5px;font-weight:400;color:#2e2e2e;letter-spacing:0.2px">Additional</div>
<div class="r" style="left:26px;top:480.2px;width:887.30px;height:106.20px;border:3px solid #f27a3a;box-sizing:border-box"></div>
<div class="r" style="left:158px;top:616.6px;width:737.00px;height:13.40px;border:1px solid #dcdcdc;box-sizing:border-box"></div>
</body></html>
